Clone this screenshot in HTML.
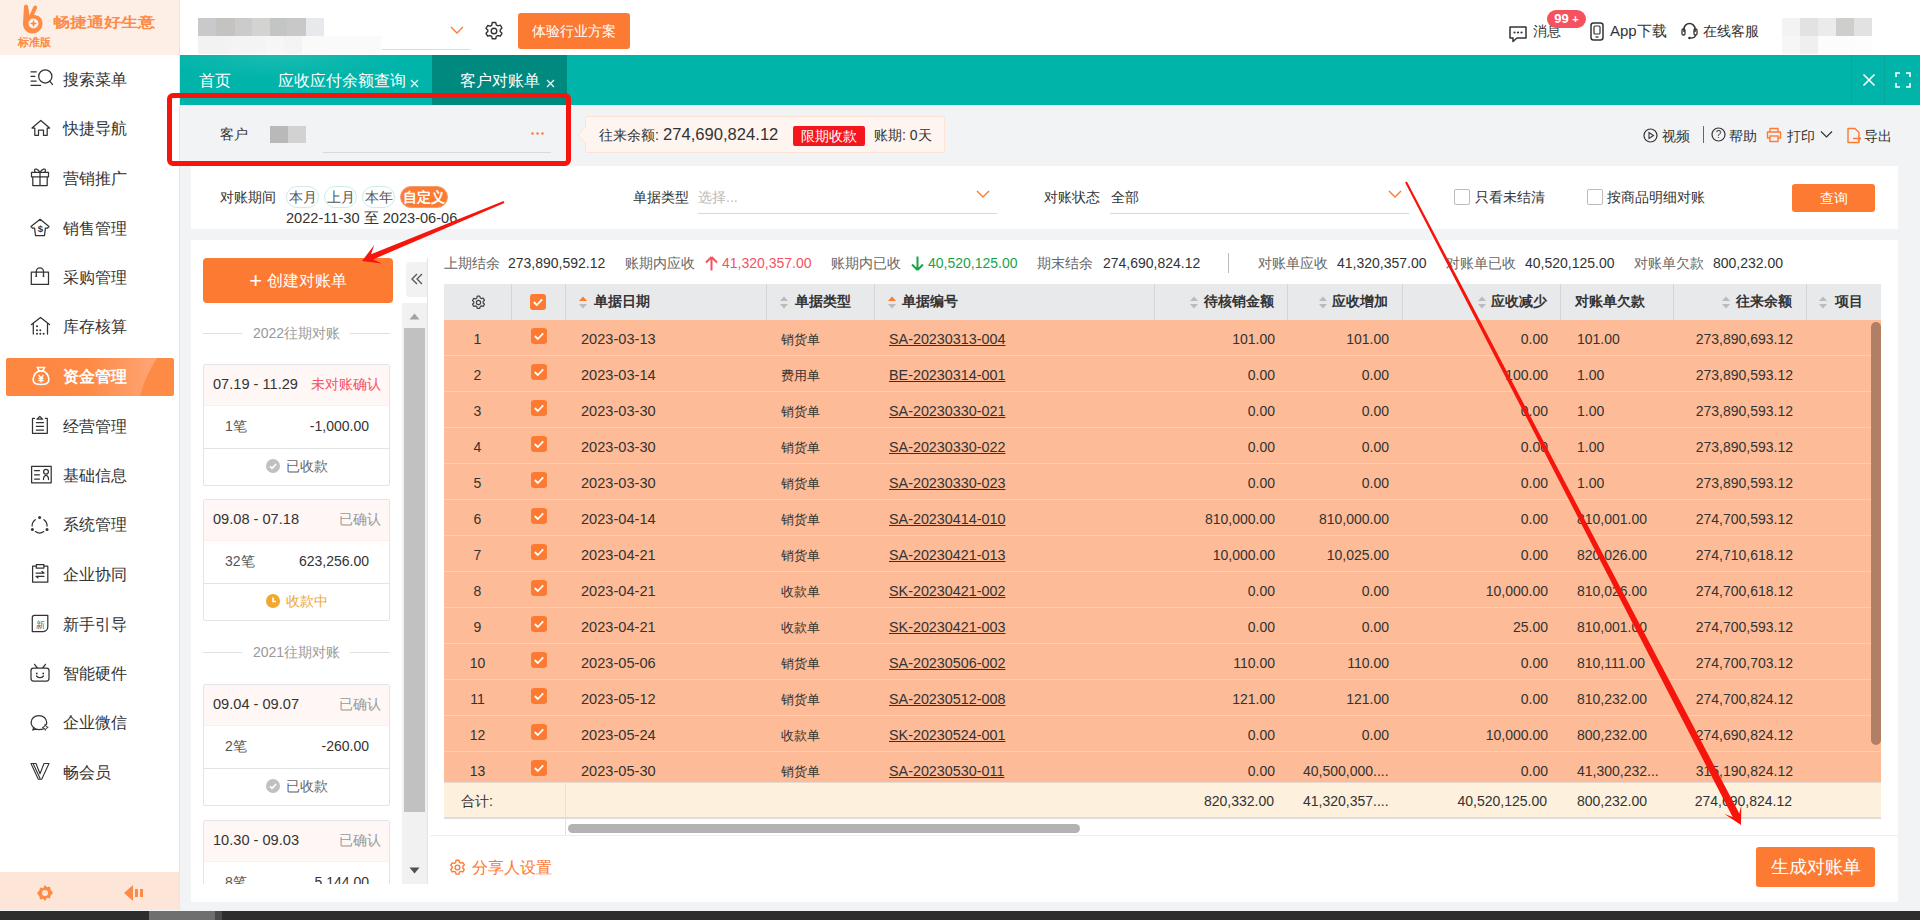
<!DOCTYPE html>
<html><head><meta charset="utf-8">
<style>
*{box-sizing:border-box;margin:0;padding:0}
html,body{width:1920px;height:920px;overflow:hidden;background:#f2f3f5;font-family:"Liberation Sans",sans-serif;color:#333;font-size:14px}
.a{position:absolute;white-space:nowrap}
#side{position:absolute;left:0;top:0;width:180px;height:910px;background:#fff;border-right:1px solid #e6e6e6}
#logo{position:absolute;left:0;top:0;width:179px;height:55px;background:#fdeee6}
.mi{position:absolute;left:0;width:179px;height:40px}
.mi .t{position:absolute;left:63px;top:11.4px;font-size:16px;color:#333;line-height:20px}
.mi svg{position:absolute;left:31px;top:10px}
.act{background:linear-gradient(100deg,#fd8040 0%,#fd8a48 70%,#fda070 71%,#fd9a66 100%);border-radius:3px}
#sidebot{position:absolute;left:0;top:872px;width:179px;height:38px;background:#fde6d8}
#hdr{position:absolute;left:180px;top:0;width:1740px;height:55px;background:#fff}
#tabs{position:absolute;left:180px;top:55px;width:1740px;height:50px;background:#00b4a9}
.tab{position:absolute;top:0;height:50px;color:#fff;font-size:16px;line-height:52px}
.btn{position:absolute;background:#fd7a32;color:#fff;text-align:center;border-radius:3px}
.panel{position:absolute;background:#fff}
.lbl{color:#333;font-size:14px}
.pill{position:absolute;top:186px;height:22px;border:1px solid #cdebe9;border-radius:11px;font-size:14px;line-height:20px;text-align:center;color:#555}
.card{position:absolute;left:203px;width:187px;height:122px;border:1px solid #e4e4e4;background:#fff;border-radius:2px;overflow:hidden}
.card .h{position:absolute;left:0;top:0;width:185px;height:41px;background:#fff7f5;border-bottom:1px solid #fdeee6}
.card .m{position:absolute;left:0;top:41px;width:185px;height:43px;border-bottom:1px solid #e4e4e4}
table{border-collapse:collapse}
.dt{font-size:14.6px !important}
.dc{font-size:14.35px !important}
</style></head><body>
<!-- SIDEBAR -->
<div id="side">
  <div id="logo">
<svg class="a" style="left:22px;top:3px" width="24" height="31" viewBox="0 0 24 31"><path d="M2 3.5c0-2 3.5-2.5 4-0.5l1.5 9.5 4-9c1-2 4.5-1 3.5 1.5l-3 7c5 0 8.5 3.5 8.5 8.5 0 5.5-4.5 10-10 10S1 26 1 20.5z" fill="#fd8a45"/><circle cx="11.5" cy="20.5" r="5" fill="#fdeee6"/><path d="M11.5 16.8l1 2.7 2.7 1-2.7 1-1 2.7-1-2.7-2.7-1 2.7-1z" fill="#fd8a45"/></svg>
<div class="a" style="left:53px;top:12px;font-size:17.4px;line-height:20px;font-weight:bold;color:#fd8a45;letter-spacing:0px;transform:scale(1,0.82);transform-origin:0 50%">畅捷通好生意</div>
<div class="a" style="left:18px;top:35px;font-size:11px;line-height:15px;font-weight:bold;color:#fd8a45">标准版</div>
</div>
<div class="mi" style="top:59px"><div class="t">搜索菜单</div></div>
<div class="mi" style="top:108px"><div class="t">快捷导航</div></div>
<div class="mi" style="top:158px"><div class="t">营销推广</div></div>
<div class="mi" style="top:208px"><div class="t">销售管理</div></div>
<div class="mi" style="top:257px"><div class="t">采购管理</div></div>
<div class="mi" style="top:306px"><div class="t">库存核算</div></div>
<div class="mi act" style="top:358px;left:6px;width:168px;height:38px;overflow:hidden"><svg width="168" height="38" viewBox="0 0 168 38" style="left:0;top:0"><defs><linearGradient id="ag" x1="0" x2="1" y1="0" y2="0"><stop offset="0" stop-color="#fd8640"/><stop offset="0.55" stop-color="#fd8a46"/><stop offset="1" stop-color="#fea677"/></linearGradient></defs><rect width="168" height="38" fill="#fd8a45"/><path d="M0 0H151Q140 16 134 38H0z" fill="url(#ag)"/></svg><svg width="20" height="20" viewBox="0 0 20 20" fill="none" stroke="#fff" stroke-width="1.6" style="left:25px;top:8px"><path d="M6.5 1.5h7l-1.8 3.5h-3.4z"/><path d="M7.5 5C3 7.5 1.5 12 2.5 15.5 3.3 18 6 18.5 10 18.5s6.7-.5 7.5-3C18.5 12 17 7.5 12.5 5z"/><path d="M7.5 9l2.5 3 2.5-3M10 12v4.5M7.5 12.5h5M7.5 14.5h5" stroke-width="1.3"/></svg><div class="t" style="left:57px;top:9px;color:#fff;font-weight:bold">资金管理</div></div>
<div class="mi" style="top:406px"><div class="t">经营管理</div></div>
<div class="mi" style="top:455px"><div class="t">基础信息</div></div>
<div class="mi" style="top:504px"><div class="t">系统管理</div></div>
<div class="mi" style="top:554px"><div class="t">企业协同</div></div>
<div class="mi" style="top:604px"><div class="t">新手引导</div></div>
<div class="mi" style="top:653px"><div class="t">智能硬件</div></div>
<div class="mi" style="top:702px"><div class="t">企业微信</div></div>
<div class="mi" style="top:752px"><div class="t">畅会员</div></div>
  <svg class="a" style="left:0;top:0" width="60" height="800" viewBox="0 0 60 800" fill="none" stroke="#333" stroke-width="1.25" stroke-linecap="round" stroke-linejoin="round">
<path d="M31 71.8h5.3M31 76.4h3.8M31 81h5.2M31 85.3h9.6"/><circle cx="45.3" cy="76.4" r="6.6"/><path d="M49.8 81.2l2.7 3.4"/>
<path d="M32 128L40.8 120.5 49.6 128h-2.4v7.3h-3.7V130h-5v5.3h-3.7V128z"/>
<path d="M31.5 172.3h17v4.6h-17zM32.8 176.9v8.6h14.4v-8.6M40 172.3v13.2M40 172.3c-2-3.5-5.5-4.5-5.5-1.5 0 1.2 1 1.5 1.8 1.5M40 172.3c2-3.5 5.5-4.5 5.5-1.5 0 1.2-1 1.5-1.8 1.5"/>
<path d="M40.1 219.3L31 226.5l1.6 1.7h2l.9 7.3h9l.9-7.3h2l1.6-1.7z"/>
<path d="M31.3 272h17.2v12.4H31.3zM36.3 276v-4.5a3.6 3.6 0 0 1 7.2 0V276"/>
<path d="M31.5 324.5l9-7 9 7M33.3 323.2V334M47.5 323.2V334"/>
<path d="M34.5 418.3h-2v15h14.8v-15h-2M37 419.2l2.8-2.8 2.8 2.8zM36.3 422.5h7.2M36.3 426.3h7.2M36.3 430h7.2"/>
<path d="M31.6 466.3h19.6v16.5H31.6zM34.5 470.5h5M34.5 474.8h5M34.5 479h5M43.5 479.5c0-2.5 1-4 2.5-4.2 1.5.2 2.5 1.7 2.5 4.2"/><circle cx="46" cy="471.8" r="2.4"/>
<path d="M35.3 519.7a7.4 7.4 0 0 0-3.2 6.2M43.9 519.7a7.4 7.4 0 0 1 3.2 6.2M35.4 531.6a7.4 7.4 0 0 0 8.4 0"/>
<path d="M35.8 566.2h-3.2v16h15.2v-16h-3.2M36.3 564.6h7.6v3.4h-7.6zM36 573h8l-2-1.6M44 576.3h-8l2 1.6"/>
<path d="M34.5 615.3h13.3v11.5a4.7 4.7 0 0 1-4.7 4.7H32.3V617.5a2.2 2.2 0 0 1 2.2-2.2z"/>
<path d="M33.5 668h13a2.5 2.5 0 0 1 2.5 2.5v8a2.5 2.5 0 0 1-2.5 2.5h-13a2.5 2.5 0 0 1-2.5-2.5v-8a2.5 2.5 0 0 1 2.5-2.5zM34.5 664.3l3 3.7M45.5 664.3l-3 3.7M36.5 676c2 2.3 5 2.3 7 0"/>
<path d="M43.5 728.8c-1.5.5-3 .7-4.6.7-4.3 0-7.8-3.1-7.8-7s3.5-7 7.8-7 7.8 3.1 7.8 7c0 .7-.1 1.3-.3 1.9M34 727.5l-1.3 2.5 3.3-.8"/><path d="M45.3 724.5l.9 2 2 .9-2 .9-.9 2-.9-2-2-.9 2-.9z" stroke-width="1"/>
<path d="M31 763.5h5l4 10.3 4-10.3h5l-7.3 15.7h-3.4zM33.5 764.5l6.5 13.7M35.5 764.5" stroke-width="1.1"/>
</svg>
<svg class="a" style="left:0;top:0" width="60" height="800" viewBox="0 0 60 800" fill="#333" stroke="none">
<text x="40.3" y="231.8" font-size="9.5" font-weight="bold" text-anchor="middle" font-family="Liberation Sans">$</text>
<circle cx="36.3" cy="276.2" r="0.9"/><circle cx="43.5" cy="276.2" r="0.9"/>
<circle cx="37" cy="326.3" r="1"/><circle cx="37" cy="330.2" r="1"/><circle cx="40.3" cy="330.2" r="1"/><circle cx="37" cy="333.8" r="1"/><circle cx="40.3" cy="333.8" r="1"/><circle cx="43.6" cy="333.8" r="1"/>
<circle cx="39.6" cy="517.6" r="1.5"/><circle cx="32.4" cy="529.4" r="1.5"/><circle cx="47" cy="529.4" r="1.5"/>
<circle cx="36.8" cy="673.5" r="0.9"/><circle cx="43.2" cy="673.5" r="0.9"/>
<text x="40" y="627.5" font-size="9" text-anchor="middle" fill="#555">新</text>
</svg>
<div id="sidebot">
<svg class="a" style="left:36px;top:12px" width="18" height="18" viewBox="0 0 18 18"><path d="M9 1l2 2.2 3-.6.6 3L17 9l-2.4 2.4-.6 3-3-.6L9 17l-2-2.2-3 .6-.6-3L1 9l2.4-2.4.6-3 3 .6z" fill="#fd8a45"/><circle cx="9" cy="9" r="3" fill="#fde6d8"/></svg>
<svg class="a" style="left:123px;top:12px" width="22" height="18" viewBox="0 0 22 18"><path d="M1 9L10 1v16z" fill="#fd8a45"/><rect x="12" y="5" width="3" height="8" fill="#fd8a45"/><rect x="17" y="5" width="3" height="8" fill="#fd8a45"/></svg>
</div>
</div>
<!-- HEADER -->
<div id="hdr">
<div class="a" style="left:18px;top:18px;width:126px;height:18px;background:linear-gradient(90deg,#c9c9cb 0 14%,#c4c3c2 14% 29%,#cbcbcb 29% 43%,#d3d3d1 43% 57%,#c3c5c4 57% 71%,#c8c8c8 71% 86%,#e8e9ec 86% 100%)"></div>
<div class="a" style="left:18px;top:36px;width:183px;height:18px;background:linear-gradient(90deg,#f2f2f2 0 18%,#f4f4f4 18% 37%,#f6f6f6 37% 47%,#f3f3f3 47% 57%,#fafafa 57% 100%)"></div>
<div class="a" style="left:202px;top:49px;width:88px;height:1px;background:#dcdcdc"></div>
<svg class="a" style="left:270px;top:25px" width="14" height="10" viewBox="0 0 14 10"><path d="M1 2l6 6 6-6" fill="none" stroke="#fd7a32" stroke-width="1.4"/></svg>
<svg class="a" style="left:304px;top:21px" width="20" height="20" viewBox="0 0 20 20"><path d="M8.3 1.5h3.4l.6 2.4 1.6.9 2.4-.7 1.7 2.9-1.8 1.7v1.9l1.8 1.7-1.7 2.9-2.4-.7-1.6.9-.6 2.4H8.3l-.6-2.4-1.6-.9-2.4.7-1.7-2.9 1.8-1.7V9.1L2 7.4l1.7-2.9 2.4.7 1.6-.9z" fill="none" stroke="#333" stroke-width="1.4" stroke-linejoin="round"/><circle cx="10" cy="10" r="2.8" fill="none" stroke="#333" stroke-width="1.4"/></svg>
<div class="btn" style="left:338px;top:13px;width:112px;height:36px;line-height:36px;font-size:14px">体验行业方案</div>
<!-- right -->
<svg class="a" style="left:1328px;top:24px" width="20" height="20" viewBox="0 0 20 20"><path d="M2 3h16v11H9l-4 3.5V14H2z" fill="none" stroke="#333" stroke-width="1.5" stroke-linejoin="round"/><circle cx="6.5" cy="8.5" r="1.1" fill="#333"/><circle cx="10" cy="8.5" r="1.1" fill="#333"/><circle cx="13.5" cy="8.5" r="1.1" fill="#333"/></svg>
<div class="a" style="left:1353px;top:22px;font-size:14px;line-height:18px">消息</div>
<div class="a" style="left:1367px;top:10px;width:39px;height:18px;border-radius:9px;background:#f5515f;color:#fff;font-size:13px;font-weight:bold;line-height:18px;text-align:center">99 <span style="font-size:11px">+</span></div>
<svg class="a" style="left:1409px;top:22px" width="16" height="19" viewBox="0 0 16 19"><rect x="2" y="1" width="12" height="17" rx="2.5" fill="none" stroke="#333" stroke-width="1.5"/><rect x="5" y="4" width="6" height="8" rx="1" fill="none" stroke="#333" stroke-width="1.2"/><path d="M6.5 15h3" stroke="#333" stroke-width="1.3"/></svg>
<div class="a" style="left:1430px;top:21px;font-size:15px;line-height:20px">App下载</div>
<svg class="a" style="left:1501px;top:21px" width="17" height="19" viewBox="0 0 17 19"><path d="M3 11V8a5.5 5.5 0 0 1 11 0v3" fill="none" stroke="#333" stroke-width="1.5"/><rect x="1" y="8" width="3" height="6" rx="1.3" fill="none" stroke="#333" stroke-width="1.3"/><rect x="13" y="8" width="3" height="6" rx="1.3" fill="none" stroke="#333" stroke-width="1.3"/><path d="M14.5 14c0 2-2 3-5 3" fill="none" stroke="#333" stroke-width="1.3"/><circle cx="8.5" cy="17" r="1.3" fill="#333"/></svg>
<div class="a" style="left:1523px;top:21px;font-size:14px;line-height:20px">在线客服</div>
<div class="a" style="left:1602px;top:18px;width:18px;height:18px;background:#f3f3f3"></div><div class="a" style="left:1602px;top:36px;width:18px;height:18px;background:#f6f6f6"></div><div class="a" style="left:1620px;top:18px;width:18px;height:18px;background:#e2e2e2"></div><div class="a" style="left:1620px;top:36px;width:18px;height:18px;background:#efefef"></div><div class="a" style="left:1638px;top:18px;width:18px;height:18px;background:#ebebeb"></div><div class="a" style="left:1638px;top:36px;width:18px;height:18px;background:#fcfcfc"></div><div class="a" style="left:1656px;top:18px;width:18px;height:18px;background:#cececc"></div><div class="a" style="left:1656px;top:36px;width:18px;height:18px;background:#fcfcfc"></div><div class="a" style="left:1674px;top:18px;width:18px;height:18px;background:#e1e2e1"></div><div class="a" style="left:1674px;top:36px;width:18px;height:18px;background:#fdfdfd"></div>
</div>
<div id="tabs">
  <div class="tab" style="left:19px">首页</div>
  <div class="tab" style="left:98px;width:150px">应收应付余额查询<svg width="9" height="9" viewBox="0 0 9 9" style="position:absolute;left:132px;top:24px"><path d="M1 1l7 7M8 1L1 8" stroke="#fff" stroke-width="1.2"/></svg></div>
  <div class="tab" style="left:252px;width:135px;background:#00897f;padding-left:28px">客户对账单<svg width="9" height="9" viewBox="0 0 9 9" style="position:absolute;left:114px;top:24px"><path d="M1 1l7 7M8 1L1 8" stroke="#fff" stroke-width="1.2"/></svg></div>
  <div class="a" style="left:1671px;top:0;width:1px;height:50px;background:#0aa69c"></div>
  <div class="a" style="left:1704px;top:0;width:1px;height:50px;background:#0aa69c"></div>
  <svg class="a" style="left:1682px;top:18px" width="14" height="14" viewBox="0 0 14 14"><path d="M1.5 1.5l11 11M12.5 1.5l-11 11" stroke="#fff" stroke-width="1.6"/></svg>
  <svg class="a" style="left:1715px;top:17px" width="16" height="16" viewBox="0 0 16 16"><path d="M1 5V1h4M11 1h4v4M15 11v4h-4M5 15H1v-4" fill="none" stroke="#fff" stroke-width="1.6"/></svg>
</div>
<div class="a" style="left:180px;top:30px;width:260px;height:50px;background:radial-gradient(ellipse 130px 24px at 100px 25px,rgba(255,255,255,0.10),rgba(255,255,255,0) 100%)"></div>
<!-- customer row -->
<div class="a lbl" style="left:220px;top:125px;font-size:14px;line-height:18px">客户</div>
<div class="a" style="left:270px;top:126px;width:18px;height:17px;background:#b9b9b9"></div>
<div class="a" style="left:288px;top:126px;width:18px;height:17px;background:#d2d2d2"></div>
<div class="a" style="left:323px;top:152px;width:228px;height:1px;background:#d9d9d9"></div>
<svg class="a" style="left:530px;top:131px" width="15" height="5" viewBox="0 0 15 5"><circle cx="2.5" cy="2.5" r="1.2" fill="#fd7a32"/><circle cx="7.5" cy="2.5" r="1.2" fill="#fd7a32"/><circle cx="12.5" cy="2.5" r="1.2" fill="#fd7a32"/></svg>
<!-- balance box -->
<div class="a" style="left:585px;top:116px;width:360px;height:37px;background:#fff5f0;border:1px solid #fde3d5;border-radius:2px"></div>
<svg class="a" style="left:577px;top:126px" width="10" height="18" viewBox="0 0 10 18"><path d="M9 0L1 9l8 9" fill="#fff5f0" stroke="#fde3d5" stroke-width="1"/><rect x="9" y="0" width="1" height="18" fill="#fff5f0"/></svg>
<div class="a" style="left:599px;top:126px;font-size:14px;line-height:18px">往来余额:</div>
<div class="a" style="left:663px;top:124px;font-size:16.6px;line-height:22px">274,690,824.12</div>
<div class="a" style="left:793px;top:126px;width:72px;height:20px;background:#f5161d;border-radius:2px;color:#fff;font-size:14px;line-height:20px;text-align:center">限期收款</div>
<div class="a" style="left:874px;top:126px;font-size:14px;line-height:18px">账期: 0天</div>
<!-- actions -->
<svg class="a" style="left:1643px;top:128px" width="15" height="15" viewBox="0 0 15 15"><circle cx="7.5" cy="7.5" r="6.5" fill="none" stroke="#333" stroke-width="1.2"/><path d="M6 4.5v6l4.5-3z" fill="none" stroke="#333" stroke-width="1.1"/></svg>
<div class="a" style="left:1662px;top:127px;font-size:14px;line-height:18px">视频</div>
<div class="a" style="left:1703px;top:126px;width:1px;height:17px;background:#666"></div>
<svg class="a" style="left:1711px;top:127px" width="15" height="15" viewBox="0 0 15 15"><circle cx="7.5" cy="7.5" r="6.5" fill="none" stroke="#333" stroke-width="1.2"/><text x="7.5" y="11.3" font-size="10" text-anchor="middle" fill="#333">?</text></svg>
<div class="a" style="left:1729px;top:127px;font-size:14px;line-height:18px">帮助</div>
<svg class="a" style="left:1766px;top:127px" width="16" height="16" viewBox="0 0 16 16"><path d="M4 5V1.5h8V5M4 11H1.5V5h13v6H12" fill="none" stroke="#fd7a32" stroke-width="1.4" stroke-linejoin="round"/><rect x="4" y="9" width="8" height="5.5" fill="none" stroke="#fd7a32" stroke-width="1.4"/></svg>
<div class="a" style="left:1787px;top:127px;font-size:14px;line-height:18px">打印</div>
<svg class="a" style="left:1820px;top:130px" width="13" height="9" viewBox="0 0 13 9"><path d="M1 1.5l5.5 5.5 5.5-5.5" fill="none" stroke="#333" stroke-width="1.2"/></svg>
<svg class="a" style="left:1846px;top:127px" width="15" height="17" viewBox="0 0 15 17"><path d="M4 1.5h5l4 4V9M13 13v2.5H2V1.5h2" fill="none" stroke="#fd7a32" stroke-width="1.4" stroke-linejoin="round"/><path d="M7 11.5h7.5M12 9l2.5 2.5L12 14" fill="none" stroke="#fd7a32" stroke-width="1.3"/></svg>
<div class="a" style="left:1864px;top:127px;font-size:14px;line-height:18px">导出</div>
<!-- filter panel -->
<div class="panel" style="left:191px;top:166px;width:1707px;height:63px"></div>
<div class="a lbl" style="left:220px;top:188px;line-height:18px">对账期间</div>
<div class="pill" style="left:286px;width:33px">本月</div>
<div class="pill" style="left:324px;width:33px">上月</div>
<div class="pill" style="left:362px;width:33px">本年</div>
<div class="pill" style="left:400px;width:48px;background:#fd7a32;border-color:#f0a070;color:#fff;font-weight:bold">自定义</div>
<div class="a dt" style="left:286px;top:209px;font-size:14px;line-height:18px">2022-11-30 至 2023-06-06</div>
<div class="a lbl" style="left:633px;top:188px;line-height:18px">单据类型</div>
<div class="a" style="left:698px;top:188px;line-height:18px;color:#bbb">选择...</div>
<div class="a" style="left:698px;top:213px;width:299px;height:1px;background:#d9d9d9"></div>
<svg class="a" style="left:976px;top:189px" width="14" height="10" viewBox="0 0 14 10"><path d="M1 2l6 6 6-6" fill="none" stroke="#fd7a32" stroke-width="1.4"/></svg>
<div class="a lbl" style="left:1044px;top:188px;line-height:18px">对账状态</div>
<div class="a" style="left:1111px;top:188px;line-height:18px;color:#333">全部</div>
<div class="a" style="left:1110px;top:213px;width:299px;height:1px;background:#d9d9d9"></div>
<svg class="a" style="left:1388px;top:189px" width="14" height="10" viewBox="0 0 14 10"><path d="M1 2l6 6 6-6" fill="none" stroke="#fd7a32" stroke-width="1.4"/></svg>
<div class="a" style="left:1454px;top:189px;width:16px;height:16px;border:1px solid #bbb;border-radius:2px;background:#fff"></div>
<div class="a" style="left:1475px;top:188px;line-height:18px">只看未结清</div>
<div class="a" style="left:1587px;top:189px;width:16px;height:16px;border:1px solid #bbb;border-radius:2px;background:#fff"></div>
<div class="a" style="left:1607px;top:188px;line-height:18px">按商品明细对账</div>
<div class="btn" style="left:1792px;top:184px;width:83px;height:28px;line-height:28px;font-size:14px">查询</div>
<!-- main panel -->
<div class="panel" style="left:191px;top:240px;width:1707px;height:662px"></div>
<div class="btn" style="left:203px;top:258px;width:190px;height:45px;line-height:45px;font-size:16px;border-radius:4px"><span style="font-size:22px;font-weight:300;vertical-align:-2px">+</span> 创建对账单</div>
<div class="a" style="left:406px;top:262px;width:21px;height:35px;background:#f2f2f2;border-radius:4px 0 0 4px"></div>
<svg class="a" style="left:410px;top:272px" width="14" height="14" viewBox="0 0 14 14"><path d="M7 2L2 7l5 5M12 2L7 7l5 5" fill="none" stroke="#555" stroke-width="1.3"/></svg>
<div class="a" style="left:427px;top:258px;width:1px;height:626px;background:#e3e3e3"></div>
<div id="lst" class="a" style="left:191px;top:303px;width:236px;height:581px;overflow:hidden">
  <div class="a" style="left:12px;top:30px;width:39px;height:1px;background:#e0e0e0"></div>
  <div class="a" style="left:159px;top:30px;width:40px;height:1px;background:#e0e0e0"></div>
  <div class="a" style="left:62px;top:21px;font-size:14px;line-height:18px;color:#999">2022往期对账</div>
  <div class="card" style="left:12px;top:61px">
    <div class="h"></div><div class="m"></div>
    <div class="a dt" style="left:9px;top:10px;font-size:14px;line-height:18px;color:#333">07.19 - 11.29</div>
    <div class="a" style="right:8px;top:10px;font-size:14px;line-height:18px;color:#f5515f">未对账确认</div>
    <div class="a" style="left:21px;top:52px;font-size:14px;line-height:18px;color:#555">1笔</div>
    <div class="a d" style="right:20px;top:52px;font-size:14px;line-height:18px;color:#333">-1,000.00</div>
    <div class="a" style="left:0;width:185px;top:92px;text-align:center;font-size:14px;line-height:18px;color:#666"><svg width="14" height="14" viewBox="0 0 14 14" style="vertical-align:-2px;margin-right:6px"><circle cx="7" cy="7" r="7" fill="#c0c0c0"/><path d="M3.8 7.2l2.2 2.2 4.2-4.4" fill="none" stroke="#fff" stroke-width="1.6"/></svg>已收款</div>
  </div>
<div class="card" style="left:12px;top:196px">
    <div class="h"></div><div class="m"></div>
    <div class="a dt" style="left:9px;top:10px;font-size:14px;line-height:18px;color:#333">09.08 - 07.18</div>
    <div class="a" style="right:8px;top:10px;font-size:14px;line-height:18px;color:#999">已确认</div>
    <div class="a" style="left:21px;top:52px;font-size:14px;line-height:18px;color:#555">32笔</div>
    <div class="a d" style="right:20px;top:52px;font-size:14px;line-height:18px;color:#333">623,256.00</div>
    <div class="a" style="left:0;width:185px;top:92px;text-align:center;font-size:14px;line-height:18px;color:#f0a830"><svg width="14" height="14" viewBox="0 0 14 14" style="vertical-align:-2px;margin-right:6px"><circle cx="7" cy="7" r="7" fill="#f0a830"/><path d="M7 3.5V7.5h3" fill="none" stroke="#fff" stroke-width="1.6"/></svg>收款中</div>
  </div>
<div class="card" style="left:12px;top:381px">
    <div class="h"></div><div class="m"></div>
    <div class="a dt" style="left:9px;top:10px;font-size:14px;line-height:18px;color:#333">09.04 - 09.07</div>
    <div class="a" style="right:8px;top:10px;font-size:14px;line-height:18px;color:#999">已确认</div>
    <div class="a" style="left:21px;top:52px;font-size:14px;line-height:18px;color:#555">2笔</div>
    <div class="a d" style="right:20px;top:52px;font-size:14px;line-height:18px;color:#333">-260.00</div>
    <div class="a" style="left:0;width:185px;top:92px;text-align:center;font-size:14px;line-height:18px;color:#666"><svg width="14" height="14" viewBox="0 0 14 14" style="vertical-align:-2px;margin-right:6px"><circle cx="7" cy="7" r="7" fill="#c0c0c0"/><path d="M3.8 7.2l2.2 2.2 4.2-4.4" fill="none" stroke="#fff" stroke-width="1.6"/></svg>已收款</div>
  </div>
<div class="card" style="left:12px;top:517px">
    <div class="h"></div><div class="m"></div>
    <div class="a dt" style="left:9px;top:10px;font-size:14px;line-height:18px;color:#333">10.30 - 09.03</div>
    <div class="a" style="right:8px;top:10px;font-size:14px;line-height:18px;color:#999">已确认</div>
    <div class="a" style="left:21px;top:52px;font-size:14px;line-height:18px;color:#555">8笔</div>
    <div class="a d" style="right:20px;top:52px;font-size:14px;line-height:18px;color:#333">5,144.00</div>
    <div class="a" style="left:0;width:185px;top:92px;text-align:center;font-size:14px;line-height:18px;color:#666"><svg width="14" height="14" viewBox="0 0 14 14" style="vertical-align:-2px;margin-right:6px"><circle cx="7" cy="7" r="7" fill="#c0c0c0"/><path d="M3.8 7.2l2.2 2.2 4.2-4.4" fill="none" stroke="#fff" stroke-width="1.6"/></svg>已收款</div>
  </div>
  <div class="a" style="left:12px;top:349px;width:39px;height:1px;background:#e0e0e0"></div>
  <div class="a" style="left:159px;top:349px;width:40px;height:1px;background:#e0e0e0"></div>
  <div class="a" style="left:62px;top:340px;font-size:14px;line-height:18px;color:#999">2021往期对账</div>
  <div class="a" style="left:211px;top:0;width:25px;height:581px;background:#f1f1f1"></div>
  <svg class="a" style="left:218px;top:10px" width="11" height="7" viewBox="0 0 11 7"><path d="M5.5 0.5L10.5 6.5H0.5z" fill="#a3a3a3"/></svg>
  <div class="a" style="left:213px;top:25px;width:21px;height:484px;background:#c1c1c1"></div>
  <svg class="a" style="left:218px;top:564px" width="11" height="7" viewBox="0 0 11 7"><path d="M5.5 6.5L10.5 0.5H0.5z" fill="#505050"/></svg>
</div>
<div class="a" style="left:444px;top:254px;font-size:14px;line-height:18px;color:#666">上期结余</div>
<div class="a d" style="left:508px;top:254px;font-size:14px;line-height:18px;color:#333">273,890,592.12</div>
<div class="a" style="left:625px;top:254px;font-size:14px;line-height:18px;color:#666">账期内应收</div>
<svg class="a" style="left:705px;top:256px" width="13" height="15" viewBox="0 0 13 15"><path d="M6.5 1L1 6.5M6.5 1L12 6.5M6.5 1v13.5" fill="none" stroke="#f5515f" stroke-width="2"/></svg>
<div class="a d" style="left:722px;top:254px;font-size:14px;line-height:18px;color:#f5515f">41,320,357.00</div>
<div class="a" style="left:831px;top:254px;font-size:14px;line-height:18px;color:#666">账期内已收</div>
<svg class="a" style="left:911px;top:256px" width="13" height="15" viewBox="0 0 13 15"><path d="M6.5 14L1 8.5M6.5 14L12 8.5M6.5 14V0.5" fill="none" stroke="#1aa34a" stroke-width="2"/></svg>
<div class="a d" style="left:928px;top:254px;font-size:14px;line-height:18px;color:#1aa34a">40,520,125.00</div>
<div class="a" style="left:1037px;top:254px;font-size:14px;line-height:18px;color:#666">期末结余</div>
<div class="a d" style="left:1103px;top:254px;font-size:14px;line-height:18px;color:#333">274,690,824.12</div>
<div class="a" style="left:1228px;top:253px;width:1px;height:20px;background:#bbb"></div>
<div class="a" style="left:1258px;top:254px;font-size:14px;line-height:18px;color:#666">对账单应收</div>
<div class="a d" style="left:1337px;top:254px;font-size:14px;line-height:18px;color:#333">41,320,357.00</div>
<div class="a" style="left:1446px;top:254px;font-size:14px;line-height:18px;color:#666">对账单已收</div>
<div class="a d" style="left:1525px;top:254px;font-size:14px;line-height:18px;color:#333">40,520,125.00</div>
<div class="a" style="left:1634px;top:254px;font-size:14px;line-height:18px;color:#666">对账单欠款</div>
<div class="a d" style="left:1713px;top:254px;font-size:14px;line-height:18px;color:#333">800,232.00</div>
<div id="tbl" class="a" style="left:444px;top:284px;width:1437px;height:552px;overflow:hidden;background:#fff">
<div class="a" style="left:0;top:0;width:1437px;height:36px;background:#e8e9eb"></div>
<div class="a" style="left:67px;top:0;width:1px;height:36px;background:#d4d5d7"></div>
<div class="a" style="left:121px;top:0;width:1px;height:36px;background:#d4d5d7"></div>
<div class="a" style="left:322px;top:0;width:1px;height:36px;background:#d4d5d7"></div>
<div class="a" style="left:430px;top:0;width:1px;height:36px;background:#d4d5d7"></div>
<div class="a" style="left:710px;top:0;width:1px;height:36px;background:#d4d5d7"></div>
<div class="a" style="left:843px;top:0;width:1px;height:36px;background:#d4d5d7"></div>
<div class="a" style="left:958px;top:0;width:1px;height:36px;background:#d4d5d7"></div>
<div class="a" style="left:1116px;top:0;width:1px;height:36px;background:#d4d5d7"></div>
<div class="a" style="left:1229px;top:0;width:1px;height:36px;background:#d4d5d7"></div>
<div class="a" style="left:1362px;top:0;width:1px;height:36px;background:#d4d5d7"></div>
<svg class="a" style="left:27px;top:11px" width="15" height="15" viewBox="0 0 20 20"><path d="M8.3 1.5h3.4l.6 2.4 1.6.9 2.4-.7 1.7 2.9-1.8 1.7v1.9l1.8 1.7-1.7 2.9-2.4-.7-1.6.9-.6 2.4H8.3l-.6-2.4-1.6-.9-2.4.7-1.7-2.9 1.8-1.7V9.1L2 7.4l1.7-2.9 2.4.7 1.6-.9z" fill="none" stroke="#444" stroke-width="1.6" stroke-linejoin="round"/><circle cx="10" cy="10" r="2.8" fill="none" stroke="#444" stroke-width="1.6"/></svg>
<svg class="a" style="left:86px;top:10px" width="16" height="16" viewBox="0 0 16 16"><rect width="16" height="16" rx="3" fill="#fd7a32"/><path d="M3.8 8l3 3 5.4-5.6" fill="none" stroke="#fff" stroke-width="1.8"/></svg>
<svg class="a" style="left:135px;top:12px" width="8" height="13" viewBox="0 0 8 13"><path d="M4 0.5L8 5H0z" fill="#fd7a32"/><path d="M4 12.5L8 8H0z" fill="#bbb"/></svg><div class="a" style="left:150px;font-weight:bold;font-size:13.6px;line-height:18px;top:9px;color:#333">单据日期</div>
<svg class="a" style="left:336px;top:12px" width="8" height="13" viewBox="0 0 8 13"><path d="M4 0.5L8 5H0z" fill="#bbb"/><path d="M4 12.5L8 8H0z" fill="#bbb"/></svg><div class="a" style="left:351px;font-weight:bold;font-size:13.6px;line-height:18px;top:9px;color:#333">单据类型</div>
<svg class="a" style="left:444px;top:12px" width="8" height="13" viewBox="0 0 8 13"><path d="M4 0.5L8 5H0z" fill="#fd7a32"/><path d="M4 12.5L8 8H0z" fill="#bbb"/></svg><div class="a" style="left:458px;font-weight:bold;font-size:13.6px;line-height:18px;top:9px;color:#333">单据编号</div>
<svg class="a" style="left:746px;top:12px" width="8" height="13" viewBox="0 0 8 13"><path d="M4 0.5L8 5H0z" fill="#bbb"/><path d="M4 12.5L8 8H0z" fill="#bbb"/></svg><div class="a" style="right:607px;font-weight:bold;font-size:13.6px;line-height:18px;top:9px;color:#333">待核销金额</div>
<svg class="a" style="left:875px;top:12px" width="8" height="13" viewBox="0 0 8 13"><path d="M4 0.5L8 5H0z" fill="#bbb"/><path d="M4 12.5L8 8H0z" fill="#bbb"/></svg><div class="a" style="right:493px;font-weight:bold;font-size:13.6px;line-height:18px;top:9px;color:#333">应收增加</div>
<svg class="a" style="left:1034px;top:12px" width="8" height="13" viewBox="0 0 8 13"><path d="M4 0.5L8 5H0z" fill="#bbb"/><path d="M4 12.5L8 8H0z" fill="#bbb"/></svg><div class="a" style="right:334px;font-weight:bold;font-size:13.6px;line-height:18px;top:9px;color:#333">应收减少</div>
<div class="a" style="left:1131px;font-weight:bold;font-size:13.6px;line-height:18px;top:9px;color:#333">对账单欠款</div>
<svg class="a" style="left:1278px;top:12px" width="8" height="13" viewBox="0 0 8 13"><path d="M4 0.5L8 5H0z" fill="#bbb"/><path d="M4 12.5L8 8H0z" fill="#bbb"/></svg><div class="a" style="right:89px;font-weight:bold;font-size:13.6px;line-height:18px;top:9px;color:#333">往来余额</div>
<svg class="a" style="left:1375px;top:12px" width="8" height="13" viewBox="0 0 8 13"><path d="M4 0.5L8 5H0z" fill="#bbb"/><path d="M4 12.5L8 8H0z" fill="#bbb"/></svg><div class="a" style="left:1391px;font-weight:bold;font-size:13.6px;line-height:18px;top:9px;color:#333">项目</div>
<div class="a" style="left:0;top:36px;width:1437px;height:463px;overflow:hidden;background:#fdbb97">
<div class="a" style="left:0;top:35px;width:1437px;height:1px;background:#e2d6d2"></div>
<div class="a" style="left:0;width:67px;text-align:center;top:10px;font-size:14px;line-height:18px;color:#333">1</div>
<svg class="a" style="left:87px;top:8px" width="16" height="16" viewBox="0 0 16 16"><rect width="16" height="16" rx="3" fill="#fd7a32"/><path d="M3.8 8l3 3 5.4-5.6" fill="none" stroke="#fff" stroke-width="1.8"/></svg>
<div class="a dt" style="left:137px;top:10px;font-size:14px;line-height:18px;color:#333">2023-03-13</div>
<div class="a" style="left:337px;top:11px;font-size:13px;line-height:18px;color:#333">销货单</div>
<div class="a dt dc" style="left:445px;top:10px;font-size:14px;line-height:18px;color:#333;text-decoration:underline">SA-20230313-004</div>
<div class="a d" style="right:606px;top:10px;font-size:14px;line-height:18px;color:#333">101.00</div>
<div class="a d" style="right:492px;top:10px;font-size:14px;line-height:18px;color:#333">101.00</div>
<div class="a d" style="right:333px;top:10px;font-size:14px;line-height:18px;color:#333">0.00</div>
<div class="a d" style="left:1133px;top:10px;font-size:14px;line-height:18px;color:#333">101.00</div>
<div class="a d" style="right:88px;top:10px;font-size:14px;line-height:18px;color:#333">273,890,693.12</div>
<div class="a" style="left:0;top:71px;width:1437px;height:1px;background:#e2d6d2"></div>
<div class="a" style="left:0;width:67px;text-align:center;top:46px;font-size:14px;line-height:18px;color:#333">2</div>
<svg class="a" style="left:87px;top:44px" width="16" height="16" viewBox="0 0 16 16"><rect width="16" height="16" rx="3" fill="#fd7a32"/><path d="M3.8 8l3 3 5.4-5.6" fill="none" stroke="#fff" stroke-width="1.8"/></svg>
<div class="a dt" style="left:137px;top:46px;font-size:14px;line-height:18px;color:#333">2023-03-14</div>
<div class="a" style="left:337px;top:47px;font-size:13px;line-height:18px;color:#333">费用单</div>
<div class="a dt dc" style="left:445px;top:46px;font-size:14px;line-height:18px;color:#333;text-decoration:underline">BE-20230314-001</div>
<div class="a d" style="right:606px;top:46px;font-size:14px;line-height:18px;color:#333">0.00</div>
<div class="a d" style="right:492px;top:46px;font-size:14px;line-height:18px;color:#333">0.00</div>
<div class="a d" style="right:333px;top:46px;font-size:14px;line-height:18px;color:#333">100.00</div>
<div class="a d" style="left:1133px;top:46px;font-size:14px;line-height:18px;color:#333">1.00</div>
<div class="a d" style="right:88px;top:46px;font-size:14px;line-height:18px;color:#333">273,890,593.12</div>
<div class="a" style="left:0;top:107px;width:1437px;height:1px;background:#e2d6d2"></div>
<div class="a" style="left:0;width:67px;text-align:center;top:82px;font-size:14px;line-height:18px;color:#333">3</div>
<svg class="a" style="left:87px;top:80px" width="16" height="16" viewBox="0 0 16 16"><rect width="16" height="16" rx="3" fill="#fd7a32"/><path d="M3.8 8l3 3 5.4-5.6" fill="none" stroke="#fff" stroke-width="1.8"/></svg>
<div class="a dt" style="left:137px;top:82px;font-size:14px;line-height:18px;color:#333">2023-03-30</div>
<div class="a" style="left:337px;top:83px;font-size:13px;line-height:18px;color:#333">销货单</div>
<div class="a dt dc" style="left:445px;top:82px;font-size:14px;line-height:18px;color:#333;text-decoration:underline">SA-20230330-021</div>
<div class="a d" style="right:606px;top:82px;font-size:14px;line-height:18px;color:#333">0.00</div>
<div class="a d" style="right:492px;top:82px;font-size:14px;line-height:18px;color:#333">0.00</div>
<div class="a d" style="right:333px;top:82px;font-size:14px;line-height:18px;color:#333">0.00</div>
<div class="a d" style="left:1133px;top:82px;font-size:14px;line-height:18px;color:#333">1.00</div>
<div class="a d" style="right:88px;top:82px;font-size:14px;line-height:18px;color:#333">273,890,593.12</div>
<div class="a" style="left:0;top:143px;width:1437px;height:1px;background:#e2d6d2"></div>
<div class="a" style="left:0;width:67px;text-align:center;top:118px;font-size:14px;line-height:18px;color:#333">4</div>
<svg class="a" style="left:87px;top:116px" width="16" height="16" viewBox="0 0 16 16"><rect width="16" height="16" rx="3" fill="#fd7a32"/><path d="M3.8 8l3 3 5.4-5.6" fill="none" stroke="#fff" stroke-width="1.8"/></svg>
<div class="a dt" style="left:137px;top:118px;font-size:14px;line-height:18px;color:#333">2023-03-30</div>
<div class="a" style="left:337px;top:119px;font-size:13px;line-height:18px;color:#333">销货单</div>
<div class="a dt dc" style="left:445px;top:118px;font-size:14px;line-height:18px;color:#333;text-decoration:underline">SA-20230330-022</div>
<div class="a d" style="right:606px;top:118px;font-size:14px;line-height:18px;color:#333">0.00</div>
<div class="a d" style="right:492px;top:118px;font-size:14px;line-height:18px;color:#333">0.00</div>
<div class="a d" style="right:333px;top:118px;font-size:14px;line-height:18px;color:#333">0.00</div>
<div class="a d" style="left:1133px;top:118px;font-size:14px;line-height:18px;color:#333">1.00</div>
<div class="a d" style="right:88px;top:118px;font-size:14px;line-height:18px;color:#333">273,890,593.12</div>
<div class="a" style="left:0;top:179px;width:1437px;height:1px;background:#e2d6d2"></div>
<div class="a" style="left:0;width:67px;text-align:center;top:154px;font-size:14px;line-height:18px;color:#333">5</div>
<svg class="a" style="left:87px;top:152px" width="16" height="16" viewBox="0 0 16 16"><rect width="16" height="16" rx="3" fill="#fd7a32"/><path d="M3.8 8l3 3 5.4-5.6" fill="none" stroke="#fff" stroke-width="1.8"/></svg>
<div class="a dt" style="left:137px;top:154px;font-size:14px;line-height:18px;color:#333">2023-03-30</div>
<div class="a" style="left:337px;top:155px;font-size:13px;line-height:18px;color:#333">销货单</div>
<div class="a dt dc" style="left:445px;top:154px;font-size:14px;line-height:18px;color:#333;text-decoration:underline">SA-20230330-023</div>
<div class="a d" style="right:606px;top:154px;font-size:14px;line-height:18px;color:#333">0.00</div>
<div class="a d" style="right:492px;top:154px;font-size:14px;line-height:18px;color:#333">0.00</div>
<div class="a d" style="right:333px;top:154px;font-size:14px;line-height:18px;color:#333">0.00</div>
<div class="a d" style="left:1133px;top:154px;font-size:14px;line-height:18px;color:#333">1.00</div>
<div class="a d" style="right:88px;top:154px;font-size:14px;line-height:18px;color:#333">273,890,593.12</div>
<div class="a" style="left:0;top:215px;width:1437px;height:1px;background:#e2d6d2"></div>
<div class="a" style="left:0;width:67px;text-align:center;top:190px;font-size:14px;line-height:18px;color:#333">6</div>
<svg class="a" style="left:87px;top:188px" width="16" height="16" viewBox="0 0 16 16"><rect width="16" height="16" rx="3" fill="#fd7a32"/><path d="M3.8 8l3 3 5.4-5.6" fill="none" stroke="#fff" stroke-width="1.8"/></svg>
<div class="a dt" style="left:137px;top:190px;font-size:14px;line-height:18px;color:#333">2023-04-14</div>
<div class="a" style="left:337px;top:191px;font-size:13px;line-height:18px;color:#333">销货单</div>
<div class="a dt dc" style="left:445px;top:190px;font-size:14px;line-height:18px;color:#333;text-decoration:underline">SA-20230414-010</div>
<div class="a d" style="right:606px;top:190px;font-size:14px;line-height:18px;color:#333">810,000.00</div>
<div class="a d" style="right:492px;top:190px;font-size:14px;line-height:18px;color:#333">810,000.00</div>
<div class="a d" style="right:333px;top:190px;font-size:14px;line-height:18px;color:#333">0.00</div>
<div class="a d" style="left:1133px;top:190px;font-size:14px;line-height:18px;color:#333">810,001.00</div>
<div class="a d" style="right:88px;top:190px;font-size:14px;line-height:18px;color:#333">274,700,593.12</div>
<div class="a" style="left:0;top:251px;width:1437px;height:1px;background:#e2d6d2"></div>
<div class="a" style="left:0;width:67px;text-align:center;top:226px;font-size:14px;line-height:18px;color:#333">7</div>
<svg class="a" style="left:87px;top:224px" width="16" height="16" viewBox="0 0 16 16"><rect width="16" height="16" rx="3" fill="#fd7a32"/><path d="M3.8 8l3 3 5.4-5.6" fill="none" stroke="#fff" stroke-width="1.8"/></svg>
<div class="a dt" style="left:137px;top:226px;font-size:14px;line-height:18px;color:#333">2023-04-21</div>
<div class="a" style="left:337px;top:227px;font-size:13px;line-height:18px;color:#333">销货单</div>
<div class="a dt dc" style="left:445px;top:226px;font-size:14px;line-height:18px;color:#333;text-decoration:underline">SA-20230421-013</div>
<div class="a d" style="right:606px;top:226px;font-size:14px;line-height:18px;color:#333">10,000.00</div>
<div class="a d" style="right:492px;top:226px;font-size:14px;line-height:18px;color:#333">10,025.00</div>
<div class="a d" style="right:333px;top:226px;font-size:14px;line-height:18px;color:#333">0.00</div>
<div class="a d" style="left:1133px;top:226px;font-size:14px;line-height:18px;color:#333">820,026.00</div>
<div class="a d" style="right:88px;top:226px;font-size:14px;line-height:18px;color:#333">274,710,618.12</div>
<div class="a" style="left:0;top:287px;width:1437px;height:1px;background:#e2d6d2"></div>
<div class="a" style="left:0;width:67px;text-align:center;top:262px;font-size:14px;line-height:18px;color:#333">8</div>
<svg class="a" style="left:87px;top:260px" width="16" height="16" viewBox="0 0 16 16"><rect width="16" height="16" rx="3" fill="#fd7a32"/><path d="M3.8 8l3 3 5.4-5.6" fill="none" stroke="#fff" stroke-width="1.8"/></svg>
<div class="a dt" style="left:137px;top:262px;font-size:14px;line-height:18px;color:#333">2023-04-21</div>
<div class="a" style="left:337px;top:263px;font-size:13px;line-height:18px;color:#333">收款单</div>
<div class="a dt dc" style="left:445px;top:262px;font-size:14px;line-height:18px;color:#333;text-decoration:underline">SK-20230421-002</div>
<div class="a d" style="right:606px;top:262px;font-size:14px;line-height:18px;color:#333">0.00</div>
<div class="a d" style="right:492px;top:262px;font-size:14px;line-height:18px;color:#333">0.00</div>
<div class="a d" style="right:333px;top:262px;font-size:14px;line-height:18px;color:#333">10,000.00</div>
<div class="a d" style="left:1133px;top:262px;font-size:14px;line-height:18px;color:#333">810,026.00</div>
<div class="a d" style="right:88px;top:262px;font-size:14px;line-height:18px;color:#333">274,700,618.12</div>
<div class="a" style="left:0;top:323px;width:1437px;height:1px;background:#e2d6d2"></div>
<div class="a" style="left:0;width:67px;text-align:center;top:298px;font-size:14px;line-height:18px;color:#333">9</div>
<svg class="a" style="left:87px;top:296px" width="16" height="16" viewBox="0 0 16 16"><rect width="16" height="16" rx="3" fill="#fd7a32"/><path d="M3.8 8l3 3 5.4-5.6" fill="none" stroke="#fff" stroke-width="1.8"/></svg>
<div class="a dt" style="left:137px;top:298px;font-size:14px;line-height:18px;color:#333">2023-04-21</div>
<div class="a" style="left:337px;top:299px;font-size:13px;line-height:18px;color:#333">收款单</div>
<div class="a dt dc" style="left:445px;top:298px;font-size:14px;line-height:18px;color:#333;text-decoration:underline">SK-20230421-003</div>
<div class="a d" style="right:606px;top:298px;font-size:14px;line-height:18px;color:#333">0.00</div>
<div class="a d" style="right:492px;top:298px;font-size:14px;line-height:18px;color:#333">0.00</div>
<div class="a d" style="right:333px;top:298px;font-size:14px;line-height:18px;color:#333">25.00</div>
<div class="a d" style="left:1133px;top:298px;font-size:14px;line-height:18px;color:#333">810,001.00</div>
<div class="a d" style="right:88px;top:298px;font-size:14px;line-height:18px;color:#333">274,700,593.12</div>
<div class="a" style="left:0;top:359px;width:1437px;height:1px;background:#e2d6d2"></div>
<div class="a" style="left:0;width:67px;text-align:center;top:334px;font-size:14px;line-height:18px;color:#333">10</div>
<svg class="a" style="left:87px;top:332px" width="16" height="16" viewBox="0 0 16 16"><rect width="16" height="16" rx="3" fill="#fd7a32"/><path d="M3.8 8l3 3 5.4-5.6" fill="none" stroke="#fff" stroke-width="1.8"/></svg>
<div class="a dt" style="left:137px;top:334px;font-size:14px;line-height:18px;color:#333">2023-05-06</div>
<div class="a" style="left:337px;top:335px;font-size:13px;line-height:18px;color:#333">销货单</div>
<div class="a dt dc" style="left:445px;top:334px;font-size:14px;line-height:18px;color:#333;text-decoration:underline">SA-20230506-002</div>
<div class="a d" style="right:606px;top:334px;font-size:14px;line-height:18px;color:#333">110.00</div>
<div class="a d" style="right:492px;top:334px;font-size:14px;line-height:18px;color:#333">110.00</div>
<div class="a d" style="right:333px;top:334px;font-size:14px;line-height:18px;color:#333">0.00</div>
<div class="a d" style="left:1133px;top:334px;font-size:14px;line-height:18px;color:#333">810,111.00</div>
<div class="a d" style="right:88px;top:334px;font-size:14px;line-height:18px;color:#333">274,700,703.12</div>
<div class="a" style="left:0;top:395px;width:1437px;height:1px;background:#e2d6d2"></div>
<div class="a" style="left:0;width:67px;text-align:center;top:370px;font-size:14px;line-height:18px;color:#333">11</div>
<svg class="a" style="left:87px;top:368px" width="16" height="16" viewBox="0 0 16 16"><rect width="16" height="16" rx="3" fill="#fd7a32"/><path d="M3.8 8l3 3 5.4-5.6" fill="none" stroke="#fff" stroke-width="1.8"/></svg>
<div class="a dt" style="left:137px;top:370px;font-size:14px;line-height:18px;color:#333">2023-05-12</div>
<div class="a" style="left:337px;top:371px;font-size:13px;line-height:18px;color:#333">销货单</div>
<div class="a dt dc" style="left:445px;top:370px;font-size:14px;line-height:18px;color:#333;text-decoration:underline">SA-20230512-008</div>
<div class="a d" style="right:606px;top:370px;font-size:14px;line-height:18px;color:#333">121.00</div>
<div class="a d" style="right:492px;top:370px;font-size:14px;line-height:18px;color:#333">121.00</div>
<div class="a d" style="right:333px;top:370px;font-size:14px;line-height:18px;color:#333">0.00</div>
<div class="a d" style="left:1133px;top:370px;font-size:14px;line-height:18px;color:#333">810,232.00</div>
<div class="a d" style="right:88px;top:370px;font-size:14px;line-height:18px;color:#333">274,700,824.12</div>
<div class="a" style="left:0;top:431px;width:1437px;height:1px;background:#e2d6d2"></div>
<div class="a" style="left:0;width:67px;text-align:center;top:406px;font-size:14px;line-height:18px;color:#333">12</div>
<svg class="a" style="left:87px;top:404px" width="16" height="16" viewBox="0 0 16 16"><rect width="16" height="16" rx="3" fill="#fd7a32"/><path d="M3.8 8l3 3 5.4-5.6" fill="none" stroke="#fff" stroke-width="1.8"/></svg>
<div class="a dt" style="left:137px;top:406px;font-size:14px;line-height:18px;color:#333">2023-05-24</div>
<div class="a" style="left:337px;top:407px;font-size:13px;line-height:18px;color:#333">收款单</div>
<div class="a dt dc" style="left:445px;top:406px;font-size:14px;line-height:18px;color:#333;text-decoration:underline">SK-20230524-001</div>
<div class="a d" style="right:606px;top:406px;font-size:14px;line-height:18px;color:#333">0.00</div>
<div class="a d" style="right:492px;top:406px;font-size:14px;line-height:18px;color:#333">0.00</div>
<div class="a d" style="right:333px;top:406px;font-size:14px;line-height:18px;color:#333">10,000.00</div>
<div class="a d" style="left:1133px;top:406px;font-size:14px;line-height:18px;color:#333">800,232.00</div>
<div class="a d" style="right:88px;top:406px;font-size:14px;line-height:18px;color:#333">274,690,824.12</div>
<div class="a" style="left:0;top:467px;width:1437px;height:1px;background:#e2d6d2"></div>
<div class="a" style="left:0;width:67px;text-align:center;top:442px;font-size:14px;line-height:18px;color:#333">13</div>
<svg class="a" style="left:87px;top:440px" width="16" height="16" viewBox="0 0 16 16"><rect width="16" height="16" rx="3" fill="#fd7a32"/><path d="M3.8 8l3 3 5.4-5.6" fill="none" stroke="#fff" stroke-width="1.8"/></svg>
<div class="a dt" style="left:137px;top:442px;font-size:14px;line-height:18px;color:#333">2023-05-30</div>
<div class="a" style="left:337px;top:443px;font-size:13px;line-height:18px;color:#333">销货单</div>
<div class="a dt dc" style="left:445px;top:442px;font-size:14px;line-height:18px;color:#333;text-decoration:underline">SA-20230530-011</div>
<div class="a d" style="right:606px;top:442px;font-size:14px;line-height:18px;color:#333">0.00</div>
<div class="a d" style="left:859px;top:442px;font-size:14px;line-height:18px;color:#333">40,500,000....</div>
<div class="a d" style="right:333px;top:442px;font-size:14px;line-height:18px;color:#333">0.00</div>
<div class="a d" style="left:1133px;top:442px;font-size:14px;line-height:18px;color:#333">41,300,232...</div>
<div class="a d" style="right:88px;top:442px;font-size:14px;line-height:18px;color:#333">315,190,824.12</div>
<div class="a" style="left:1427px;top:2px;width:10px;height:423px;border-radius:5px;background:#b07f66"></div>
</div>
<div class="a" style="left:0;top:498px;width:1437px;height:37px;background:#fdf0dc;border-top:1px solid #e6d9cf;border-bottom:2px solid #dcdcdc"></div>
<div class="a" style="left:121px;top:499px;width:1px;height:52px;background:#e6e0d8"></div>
<div class="a" style="left:17px;top:508px;font-size:14px;line-height:18px;color:#333">合计:</div>
<div class="a d" style="right:607px;top:508px;font-size:14px;line-height:18px;color:#333">820,332.00</div>
<div class="a d" style="left:859px;top:508px;font-size:14px;line-height:18px;color:#333">41,320,357....</div>
<div class="a d" style="right:334px;top:508px;font-size:14px;line-height:18px;color:#333">40,520,125.00</div>
<div class="a d" style="left:1133px;top:508px;font-size:14px;line-height:18px;color:#333">800,232.00</div>
<div class="a d" style="right:89px;top:508px;font-size:14px;line-height:18px;color:#333">274,690,824.12</div>
<div class="a" style="left:124px;top:540px;width:512px;height:9px;border-radius:5px;background:#b3b3b3"></div>
<div class="a" style="left:0;top:551px;width:1437px;height:1px;background:#e0e0e0"></div>
</div>
<div class="a" style="left:430px;top:835px;width:1468px;height:1px;background:#eee"></div>
<svg class="a" style="left:449px;top:859px" width="17" height="17" viewBox="0 0 20 20"><path d="M8.3 1.5h3.4l.6 2.4 1.6.9 2.4-.7 1.7 2.9-1.8 1.7v1.9l1.8 1.7-1.7 2.9-2.4-.7-1.6.9-.6 2.4H8.3l-.6-2.4-1.6-.9-2.4.7-1.7-2.9 1.8-1.7V9.1L2 7.4l1.7-2.9 2.4.7 1.6-.9z" fill="none" stroke="#fd7a32" stroke-width="1.6" stroke-linejoin="round"/><circle cx="10" cy="10" r="2.8" fill="none" stroke="#fd7a32" stroke-width="1.6"/></svg>
<div class="a" style="left:472px;top:858px;font-size:16px;line-height:20px;color:#fd7a32">分享人设置</div>
<div class="btn" style="left:1756px;top:847px;width:119px;height:40px;line-height:40px;font-size:18px;border-radius:3px">生成对账单</div>
<!-- bottom bar -->
<div class="a" style="left:0;top:911px;width:1920px;height:9px;background:#2d2e2c"></div>
<div class="a" style="left:149px;top:911px;width:66px;height:9px;background:#6f6f6f"></div>
<div class="a" style="left:215px;top:911px;width:7px;height:9px;background:#4a4a4a"></div>
<!-- overlay -->
<div class="a" style="left:167px;top:93px;width:404px;height:73px;border:5px solid #f5150c;border-radius:6px"></div>
<svg class="a" style="left:0;top:0" width="1920" height="920" viewBox="0 0 1920 920"><polygon points="503.6,201.1 371.0,254.3 374.3,245.1 362.0,261.0 382.0,263.5 373.1,259.4 504.4,202.9" fill="#f5150c"/><polygon points="1405.1,182.5 1732.7,817.1 1724.5,813.9 1741.0,825.0 1741.3,805.1 1739.3,813.6 1406.9,181.5" fill="#f5150c"/></svg>
</body></html>
